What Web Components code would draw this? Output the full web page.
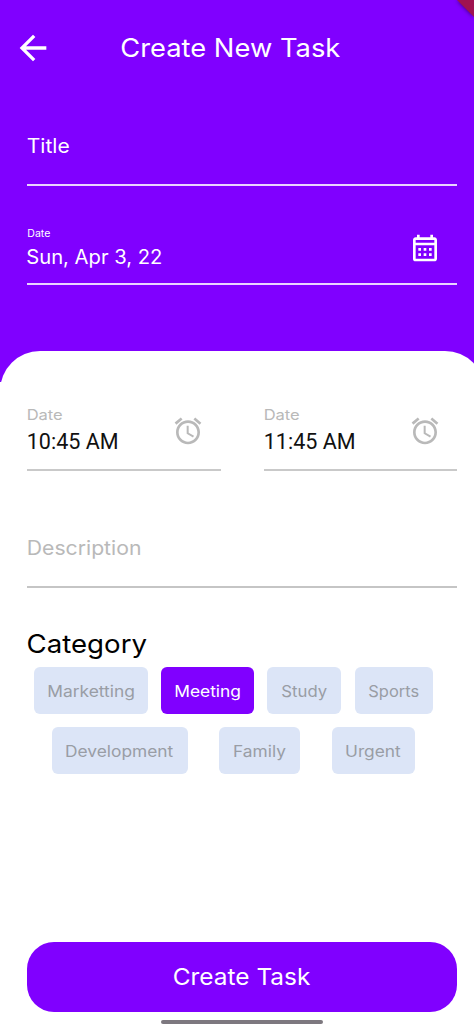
<!DOCTYPE html>
<html lang="en">
<head>
<meta charset="utf-8">
<title>Create New Task</title>
<style>
body { margin: 0; background: #fff; }
</style>
</head>
<body>
<task-page></task-page>
<script>
const define = (name, html, setup) => {
  const template = document.createElement('template');
  template.innerHTML = html;
  customElements.define(name, class extends HTMLElement {
    connectedCallback() {
      if (this.shadowRoot) return;
      this.attachShadow({ mode: 'open' }).append(template.content.cloneNode(true));
      if (setup) setup(this, this.shadowRoot);
    }
  });
};

// Text stretched horizontally so that its glyphs span exactly `span` pixels.
define('fit-text', `
<style>
:host { display: block; flex: none; white-space: nowrap; line-height: 1; }
span { display: inline-block; transform-origin: 0 50%; vertical-align: top; }
</style><span><slot></slot></span>`, (host, root) => {
  const span = +host.getAttribute('span');
  const size = host.getAttribute('size');
  const nudge = +(host.getAttribute('nudge') || 0.3);
  const family = host.getAttribute('family') || 'Inter';
  const weight = host.getAttribute('weight') || 400;
  host.style.font = `${weight} ${size}px/${Math.ceil(size * 1.2 / 2) * 2}px ${family}, "Open Sans", sans-serif`;
  host.style.width = span + 'px';
  const ctx = document.createElement('canvas').getContext('2d');
  ctx.font = `${weight} ${size}px ${family}, "Open Sans", sans-serif`;
  const m = ctx.measureText(host.textContent);
  const k = span / (m.actualBoundingBoxLeft + m.actualBoundingBoxRight);
  root.querySelector('span').style.transform = `translateX(${m.actualBoundingBoxLeft * k + nudge}px) scaleX(${k})`;
});

const icons = {
  back: 'M20 11H7.83l5.59-5.59L12 4l-8 8 8 8 1.41-1.41L7.83 13H20v-2z',
  calendar: 'M19 4h-1V2h-2v2H8V2H6v2H5c-1.11 0-1.99.9-1.99 2L3 20a2 2 0 0 0 2 2h14c1.1 0 2-.9 2-2V6c0-1.1-.9-2-2-2zm0 16H5V10h14v10zm0-12H5V6h14v2zM9 14H7v-2h2v2zm4 0h-2v-2h2v2zm4 0h-2v-2h2v2zm-8 4H7v-2h2v2zm4 0h-2v-2h2v2zm4 0h-2v-2h2v2z',
  alarm: 'M22 5.72l-4.6-3.86-1.29 1.53 4.6 3.86L22 5.72zM7.88 3.39L6.6 1.86 2 5.71l1.29 1.53 4.59-3.85zM12.5 8H11v6l4.75 2.85.75-1.23-4-2.37V8zM12 4c-4.97 0-9 4.03-9 9s4.02 9 9 9c4.97 0 9-4.03 9-9s-4.03-9-9-9zm0 16c-3.87 0-7-3.13-7-7s3.13-7 7-7 7 3.13 7 7-3.13 7-7 7z'
};
define('app-icon', `
<style>:host { display: block; flex: none; width: 32px; height: 32px; } svg { display: block; width: 100%; height: 100%; }</style>
<svg viewBox="0 0 24 24" fill="currentColor"><path/></svg>`, (host, root) => {
  root.querySelector('path').setAttribute('d', icons[host.getAttribute('name')]);
});

define('debug-ribbon', `
<style>
:host { display: block; position: absolute; top: 0; right: 0; width: 30px; height: 30px; }
svg { display: block; filter: drop-shadow(0 0 2px #0009); }
</style>
<svg width="30" height="30"><path d="M13 0H30V17Z" fill="#9f1250"/></svg>`);

define('app-bar', `
<style>
:host { display: flex; align-items: center; height: 96px; padding-left: 13.4px; color: #fff; }
app-icon { width: 40px; height: 40px; margin-right: 67.9px; }
</style>
<app-icon name="back"></app-icon><slot></slot>`);

define('form-field', `
<style>
:host { display: flex; box-sizing: border-box; align-items: flex-start; justify-content: space-between; border-bottom: 2px solid var(--line, #c9c9c9); }
div { display: flex; flex-direction: column; gap: var(--gap, 0); }
slot[name=icon] { display: block; padding: var(--icon-pad, 0); }
</style>
<div><slot></slot></div><slot name="icon"></slot>`);

define('category-chip', `
<style>
:host { display: flex; box-sizing: border-box; align-items: center; justify-content: center; height: 47px; border-radius: 6px; background: #dce5f7; color: #999da5; padding-top: 2px; }
:host([selected]) { background: #8000ff; color: #fff; }
</style><slot></slot>`);

define('primary-button', `
<style>
:host { display: flex; align-items: center; justify-content: center; height: 70px; border-radius: 27px; background: #8000ff; color: #fff; }
</style><slot></slot>`);

define('task-page', `
<style>
:host { display: flex; flex-direction: column; position: relative; box-sizing: border-box; width: 474px; height: 1027px; overflow: hidden;
  background: linear-gradient(#8000ff 382px, #fff 382px); }
header { height: 351px; box-sizing: border-box; color: #fff; --line: #e9d4ff; }
header form-field { margin: 0 17px 0 27px; }
.title { height: 90px; padding-top: 38px; }
.date { height: 99px; padding-top: 40px; --gap: 5px; --icon-pad: 6px 16px 0 0; }
main { flex: 1; display: flex; flex-direction: column; box-sizing: border-box; margin-right: -11px; padding: 0 28px 0 27px; border-radius: 40px 40px 0 0; background: #fff; color: #b9b9b9; }
.times { display: grid; grid-template-columns: 194px 193px; column-gap: 43px; padding-top: 55px; }
.times form-field { height: 65px; --gap: 5px; --icon-pad: 9px 16px 0 0; }
.times form-field:first-child { --icon-pad: 9px 17px 0 0; }
.time { color: #111; }
.description { height: 117px; padding-top: 65px; --line: #c5c5c5; }
.heading { color: #000; margin-top: 40px; }
.row { display: flex; }
.first { margin: 7px 0 0 6.7px; column-gap: 13.4px; }
.second { margin: 13px 0 0 24.8px; column-gap: 31.7px; }
primary-button { margin-top: auto; }
.home { width: 162px; height: 4px; border-radius: 2px; background: #7d787f; margin: 8px 0 3px 134px; }
</style>
<header>
  <app-bar><fit-text size="25.6" span="219">Create New Task</fit-text></app-bar>
  <form-field class="title"><fit-text size="19.6" span="42.5" nudge="-0.3">Title</fit-text></form-field>
  <form-field class="date">
    <fit-text size="10.3" span="23">Date</fit-text>
    <fit-text size="19.8" span="134">Sun, Apr 3, 22</fit-text>
    <app-icon slot="icon" name="calendar"></app-icon>
  </form-field>
</header>
<main>
  <div class="times">
    <form-field>
      <fit-text size="14.4" span="34.5" nudge="0.8">Date</fit-text>
      <fit-text class="time" size="21.6" span="90" nudge="0.7" family="Roboto">10:45 AM</fit-text>
      <app-icon slot="icon" name="alarm"></app-icon>
    </form-field>
    <form-field>
      <fit-text size="14.4" span="34.5" nudge="0.8">Date</fit-text>
      <fit-text class="time" size="21.6" span="90" nudge="0.7" family="Roboto">11:45 AM</fit-text>
      <app-icon slot="icon" name="alarm"></app-icon>
    </form-field>
  </div>
  <form-field class="description"><fit-text size="19.6" span="113" nudge="0.8">Description</fit-text></form-field>
  <fit-text class="heading" size="25.6" span="119" nudge="0.6">Category</fit-text>
  <div class="row first">
    <category-chip style="width:114px"><fit-text size="15.7" span="86">Marketting</fit-text></category-chip>
    <category-chip selected style="width:92.8px"><fit-text size="15.7" span="65">Meeting</fit-text></category-chip>
    <category-chip style="width:74px"><fit-text size="15.7" span="46">Study</fit-text></category-chip>
    <category-chip style="width:78px"><fit-text size="15.7" span="50.5">Sports</fit-text></category-chip>
  </div>
  <div class="row second">
    <category-chip style="width:136px"><fit-text size="15.7" span="107" nudge="0.1">Development</fit-text></category-chip>
    <category-chip style="width:80.6px"><fit-text size="15.7" span="52" nudge="0.1">Family</fit-text></category-chip>
    <category-chip style="width:83px"><fit-text size="15.7" span="54.5" nudge="0.1">Urgent</fit-text></category-chip>
  </div>
  <primary-button><fit-text size="23.2" span="137" nudge="-0.3">Create Task</fit-text></primary-button>
  <div class="home"></div>
</main>
<debug-ribbon></debug-ribbon>`);
</script>
</body>
</html>
